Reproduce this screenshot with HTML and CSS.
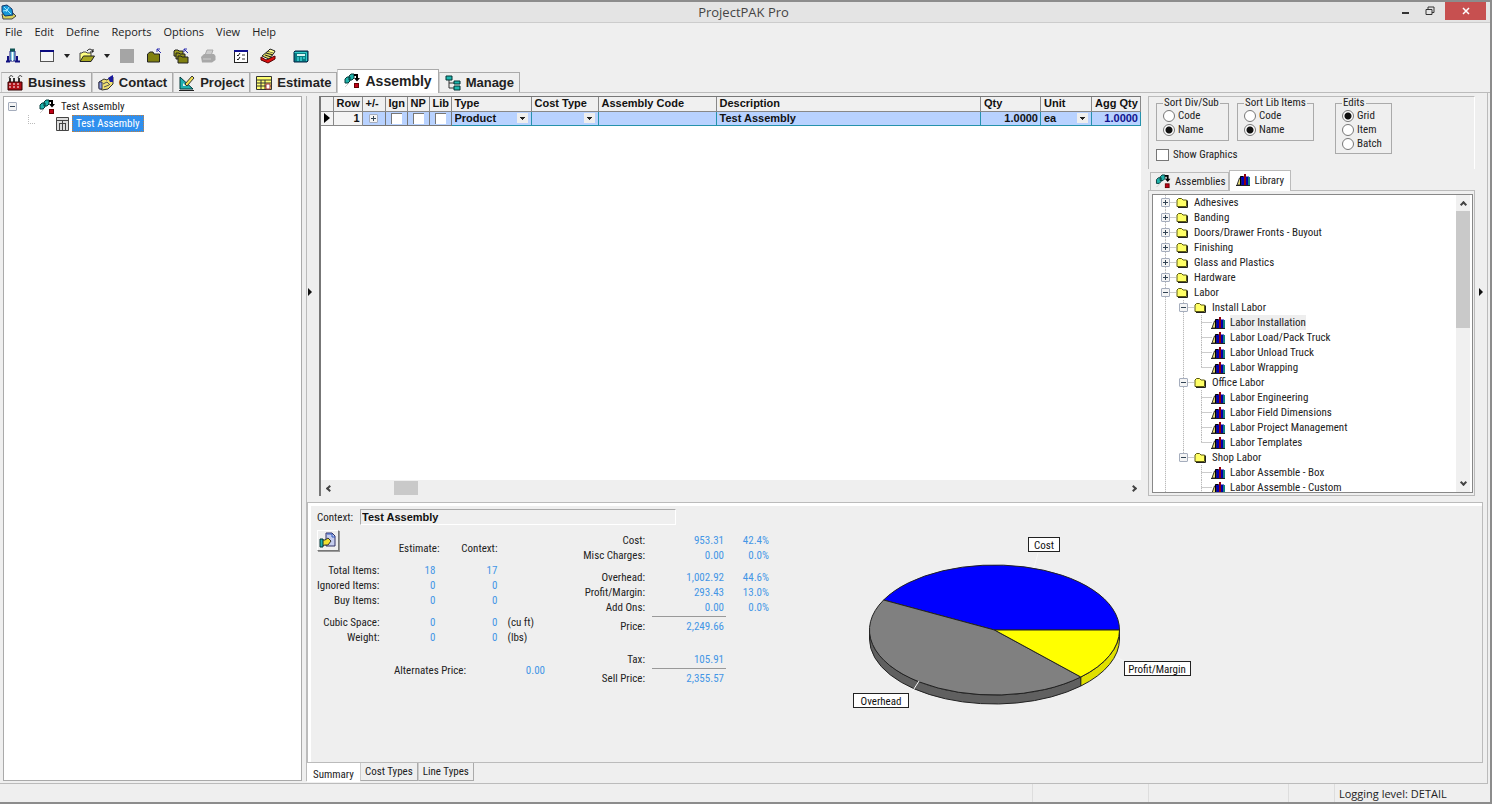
FILE: index.html
```html
<!DOCTYPE html>
<html lang="en">
<head>
<meta charset="utf-8">
<title>ProjectPAK Pro</title>
<link rel="stylesheet" href="styles.css">
</head>
<body>
<svg class="defs" aria-hidden="true">
  <symbol id="i-folder" viewBox="0 0 12 11"><path d="M1 9.500V3L2.500 1.500H5.500L7 3H10.500V9.500Z" fill="#ffff66" stroke="#5c5a10"/><path d="M11.500 3.500V10.500H2" fill="none" stroke="#222"/></symbol>
  <symbol id="i-books" viewBox="0 0 14 12"><path d="M4 2.500H13V11.500H4Z" fill="#0000b8"/><path d="M1 11L3.500 4L5 5V11Z" fill="#e8dc78" stroke="#333"/><path d="M4.500 11V2.500H7.500" fill="none" stroke="#000"/><path d="M8 0H10V12H8Z" fill="#900010"/><path d="M11 3H12V11H11Z" fill="#0000a0"/><path d="M13 3V12" stroke="#158080" stroke-width="2"/><path d="M0 11.500H14" stroke="#222"/></symbol>
  <symbol id="i-assembly" viewBox="0 0 16 16"><path d="M1 14L5 10" stroke="#ccc"/><path d="M1 6L3 4H6V8L4 10H1ZM5 3L7 1H10V5L8 7H5Z" fill="#20b2aa" stroke="#043c3c"/><path d="M10 2H13V6" fill="none" stroke="#000" stroke-width="2"/><path d="M10 5H16L13 8.500Z" fill="#000"/><rect x="10.500" y="10.500" width="4" height="4" fill="#c00018" stroke="#600"/></symbol>
</svg>
<div class="window">
  <header class="titlebar">
    <svg class="app-icon" viewBox="0 0 16 16"><path d="M2 10L13 9L16 12L12 15H3Z" fill="#d9d15b" stroke="#444"/><path d="M2 2L7 1L12 5L13 11L5 12L2 8Z" fill="#1698d8" stroke="#12376b"/><path d="M4 3L11 10M6 8L9 3M3 7L8 6" stroke="#9be6ff"/></svg>
    <h1>ProjectPAK Pro</h1>
    <div class="window-buttons">
      <button class="win" aria-label="Minimize"><svg viewBox="0 0 10 10"><path d="M1 7H8" stroke="#333" stroke-width="2"/></svg></button>
      <button class="win" aria-label="Restore"><svg viewBox="0 0 10 10"><path d="M1 3.500H7V8.500H1ZM3 3V1H9V6.500H7" fill="none" stroke="#333"/></svg></button>
      <button class="win close" aria-label="Close"><svg viewBox="0 0 10 10"><path d="M2 2L8 8M8 2L2 8" stroke="#fff" stroke-width="1.500"/></svg></button>
    </div>
  </header>
  <nav class="menu"><button>File</button><button>Edit</button><button>Define</button><button>Reports</button><button>Options</button><button>View</button><button>Help</button></nav>
  <div class="toolbar">
    <button class="tool" aria-label="Exit"><svg viewBox="0 0 16 16"><path d="M5 3H10V13H5Z" fill="#8fd6e8" stroke="#1a1a80"/><path d="M5 0.500H10V3.500H5Z" fill="#155"/><path d="M3 8V13M12 8V13M1 13.500H5M10 13.500H15" stroke="#101080" stroke-width="2"/><path d="M7.500 4V13" stroke="#fff"/></svg></button>
    <button class="tool wide" aria-label="New"><svg viewBox="0 0 16 16"><rect x="1.500" y="2.500" width="13" height="11" fill="#f6f6f6" stroke="#555"/><path d="M1 3H15" stroke="#0c0c80" stroke-width="2"/></svg></button>
    <button class="drop" aria-label="New options"></button>
    <button class="tool" aria-label="Open"><svg viewBox="0 0 16 16"><path d="M1 13V5H3L4 4H7L8 5H12V8" fill="#ffff80" stroke="#444"/><path d="M1 13.500L4.500 8H15.500L12 13.500Z" fill="#a8a820" stroke="#222"/><path d="M8 3C10 0 13 1 14 4M14 1V4H11" fill="none" stroke="#111"/></svg></button>
    <button class="drop" aria-label="Open options"></button>
    <button class="tool" aria-label="Save" disabled><svg viewBox="0 0 16 16"><rect x="1" y="1" width="14" height="14" fill="#a5a5a5"/></svg></button>
    <button class="tool apart" aria-label="Close file"><svg viewBox="0 0 16 16"><path d="M1.500 14V6L4 4H7L8 6H13.500V14Z" fill="#808010" stroke="#222"/><path d="M15 5L11 1M11 4V1H14" stroke="#3030b0" fill="none"/></svg></button>
    <button class="tool apart" aria-label="Close all"><svg viewBox="0 0 16 16"><path d="M1 8V3L2 2H5L6 3H10V9Z" fill="#a0a020" stroke="#222"/><path d="M3 11V5H6L7 6H12V11Z" fill="#909018" stroke="#222"/><path d="M5 15V8H8L9 9H15V15Z" fill="#808010" stroke="#222"/><path d="M15 5L11 1M11 4V1H14" stroke="#3030b0" fill="none"/></svg></button>
    <button class="tool apart" aria-label="Print" disabled><svg viewBox="0 0 16 16"><path d="M5 7L7 2H13L11 8" fill="#ccc" stroke="#aaa"/><path d="M1 9L4 6H14L15.500 8V12L12 14.500H2Z" fill="#a8a8a8"/><path d="M3 11H11" stroke="#ccc"/></svg></button>
    <button class="tool far" aria-label="Options"><svg viewBox="0 0 16 16"><rect x="1.500" y="2.500" width="13" height="12" fill="#fff" stroke="#222"/><path d="M1 3H15" stroke="#101090" stroke-width="2"/><path d="M4 7L5 8L7 5M4 11L5 12L7 9" fill="none" stroke="#111"/><path d="M9 7H12M9 11H12" stroke="#333"/></svg></button>
    <button class="tool apart" aria-label="Card file"><svg viewBox="0 0 16 16"><path d="M1 9L6 12L15 8V11L8 15L1 12Z" fill="#e01010" stroke="#500"/><path d="M2 8L8 3L14 5L9 11Z" fill="#e0dc60" stroke="#222"/><path d="M5 7L11 9M6 5L13 7" stroke="#222"/><path d="M8 3L10 1L15 3L14 5" fill="#ffff90" stroke="#222"/></svg></button>
    <button class="tool far" aria-label="Calculator"><svg viewBox="0 0 16 16"><path d="M1 4L2 3H15V13L14 14H1Z" fill="#087c84" stroke="#024"/><path d="M1.500 4.500H13.500V13" fill="none" stroke="#3cc"/><rect x="4" y="6" width="8" height="2" fill="#d8f6f6"/><path d="M4 10H6M7 10H9M10 10H12M4 12H6M7 12H9" stroke="#5ff"/></svg></button>
  </div>
  <nav class="tabs">
    <button class="tab"><svg viewBox="0 0 16 16"><path d="M3 15V3M7 15V3M12 15V3" stroke="#333" stroke-width="2"/><path d="M2 3C3 0 5 0 6 2M11 3C12 0 14 0 15 2" stroke="#333" fill="none"/><path d="M1 7H15V15H1Z" fill="#b01018" stroke="#300"/><path d="M2 9H14M2 12H14" stroke="#fff" stroke-dasharray="2 2"/></svg>Business</button>
    <button class="tab"><svg viewBox="0 0 16 16"><path d="M1 7L6 4L9 5L14 1L15 2V9L10 14L4 15L1 13Z" fill="#f0e070" stroke="#333"/><path d="M10 3L15 0V7L12 7Z" fill="#1a1aa0"/><path d="M1 7H4V14H1Z" fill="#90a0e0" stroke="#335"/><path d="M5 9L9 7L12 10M6 12L11 10" fill="none" stroke="#555"/></svg>Contact</button>
    <button class="tab"><svg viewBox="0 0 16 16"><path d="M1 2V14H14Z" fill="#20b0b0" stroke="#043838"/><path d="M4 8V11H7Z" fill="#eee"/><path d="M6 9L13 1L15 3L8 11Z" fill="#f0e050" stroke="#333"/><path d="M0 15.500H15" stroke="#222"/></svg>Project</button>
    <button class="tab"><svg viewBox="0 0 16 16"><path d="M0.500 1.500H15.500V14.500H0.500Z" fill="#ffff70" stroke="#333"/><path d="M1 5H15M1 8H15M1 11H15M5 5V15M9 5V15" stroke="#333"/><path d="M10 9H14V14H10Z" fill="#fff" stroke="#a33"/></svg>Estimate</button>
    <button class="tab active"><svg viewBox="0 0 16 16"><use href="#i-assembly"/></svg>Assembly</button>
    <button class="tab"><svg viewBox="0 0 16 16"><path d="M4 5V13H9M4 8H9" fill="none" stroke="#333"/><path d="M1 1H7V5H1ZM9 6H15V9H9ZM9 11H15V15H9Z" fill="#20b8b0" stroke="#033"/></svg>Manage</button>
  </nav>
  <main class="work">
    <aside class="project-tree">
      <div class="node"><span class="toggle minus"></span><svg class="node-icon" viewBox="0 0 16 16"><use href="#i-assembly"/></svg><span>Test Assembly</span></div>
      <div class="node child"><span class="elbow"></span><svg class="item-icon" viewBox="0 0 13 14"><path d="M0.500 0.500H12.500V13.500H0.500Z" fill="#ddd" stroke="#444"/><path d="M1 3.500H12M3.500 6V13M9.500 6V13M6.500 4V13" stroke="#444"/><path d="M3 6.500H10" stroke="#444"/></svg><span class="selected">Test Assembly</span></div>
    </aside>
    <div class="right">
      <div class="upper">
        <div class="splitter"><span class="arrow"></span></div>
        <section class="grid-panel">
          <table class="grid">
            <colgroup><col class="c-mark"><col class="c-row"><col class="c-exp"><col class="c-chk"><col class="c-chk"><col class="c-chk"><col class="c-type"><col class="c-cost"><col class="c-code"><col><col class="c-qty"><col class="c-unit"><col class="c-agg"></colgroup>
            <thead><tr><th></th><th class="num">Row</th><th>+/-</th><th>Ign</th><th>NP</th><th>Lib</th><th>Type</th><th>Cost Type</th><th>Assembly Code</th><th>Description</th><th>Qty</th><th>Unit</th><th>Agg Qty</th></tr></thead>
            <tbody><tr>
              <td class="plain"><span class="marker"></span></td><td class="plain num">1</td><td class="mid expander"><span class="toggle plus"></span></td>
              <td class="mid"><input class="flat" type="checkbox" aria-label="Ign"></td><td class="mid"><input class="flat" type="checkbox" aria-label="NP"></td><td class="mid"><input class="flat" type="checkbox" aria-label="Lib"></td>
              <td class="combo-cell"><span class="combo"><select aria-label="Type"><option>Product</option></select></span></td>
              <td class="combo-cell"><span class="combo"><select aria-label="Cost Type"><option></option></select></span></td>
              <td></td><td>Test Assembly</td><td class="num dark-left">1.0000</td>
              <td class="combo-cell"><span class="combo"><select aria-label="Unit"><option>ea</option></select></span></td>
              <td class="num agg">1.0000</td>
            </tr></tbody>
          </table>
          <div class="grid-space"></div>
          <div class="hscroll"><span class="chev left"></span><span class="hthumb"></span><span class="chev rightward"></span></div>
        </section>
        <section class="library">
          <div class="options">
            <div class="groups">
              <fieldset class="div"><legend>Sort Div/Sub</legend><label><input type="radio" name="div">Code</label><label><input type="radio" name="div" checked>Name</label></fieldset>
              <fieldset class="lib"><legend>Sort Lib Items</legend><label><input type="radio" name="lib">Code</label><label><input type="radio" name="lib" checked>Name</label></fieldset>
              <fieldset class="edits"><legend>Edits</legend><label><input type="radio" name="edit" checked>Grid</label><label><input type="radio" name="edit">Item</label><label><input type="radio" name="edit">Batch</label></fieldset>
            </div>
            <label class="show"><input type="checkbox">Show Graphics</label>
          </div>
          <div class="subtabs">
            <button class="subtab"><svg viewBox="0 0 16 16"><use href="#i-assembly"/></svg>Assemblies</button>
            <button class="subtab active"><svg viewBox="0 0 14 12"><use href="#i-books"/></svg>Library</button>
          </div>
          <div class="tree-pane"><div class="tree-box">
            <ul class="tree">
              <li><div class="leaf"><span class="toggle plus"></span><svg class="folder"><use href="#i-folder"/></svg><span>Adhesives</span></div></li>
              <li><div class="leaf"><span class="toggle plus"></span><svg class="folder"><use href="#i-folder"/></svg><span>Banding</span></div></li>
              <li><div class="leaf"><span class="toggle plus"></span><svg class="folder"><use href="#i-folder"/></svg><span>Doors/Drawer Fronts - Buyout</span></div></li>
              <li><div class="leaf"><span class="toggle plus"></span><svg class="folder"><use href="#i-folder"/></svg><span>Finishing</span></div></li>
              <li><div class="leaf"><span class="toggle plus"></span><svg class="folder"><use href="#i-folder"/></svg><span>Glass and Plastics</span></div></li>
              <li><div class="leaf"><span class="toggle plus"></span><svg class="folder"><use href="#i-folder"/></svg><span>Hardware</span></div></li>
              <li><div class="leaf"><span class="toggle minus"></span><svg class="folder"><use href="#i-folder"/></svg><span>Labor</span></div>
                <ul>
                  <li><div class="leaf"><span class="toggle minus"></span><svg class="folder"><use href="#i-folder"/></svg><span>Install Labor</span></div>
                    <ul>
                      <li><div class="leaf book"><svg class="books"><use href="#i-books"/></svg><span class="current">Labor Installation</span></div></li>
                      <li><div class="leaf book"><svg class="books"><use href="#i-books"/></svg><span>Labor Load/Pack Truck</span></div></li>
                      <li><div class="leaf book"><svg class="books"><use href="#i-books"/></svg><span>Labor Unload Truck</span></div></li>
                      <li><div class="leaf book"><svg class="books"><use href="#i-books"/></svg><span>Labor Wrapping</span></div></li>
                    </ul></li>
                  <li><div class="leaf"><span class="toggle minus"></span><svg class="folder"><use href="#i-folder"/></svg><span>Office Labor</span></div>
                    <ul>
                      <li><div class="leaf book"><svg class="books"><use href="#i-books"/></svg><span>Labor Engineering</span></div></li>
                      <li><div class="leaf book"><svg class="books"><use href="#i-books"/></svg><span>Labor Field Dimensions</span></div></li>
                      <li><div class="leaf book"><svg class="books"><use href="#i-books"/></svg><span>Labor Project Management</span></div></li>
                      <li><div class="leaf book"><svg class="books"><use href="#i-books"/></svg><span>Labor Templates</span></div></li>
                    </ul></li>
                  <li><div class="leaf"><span class="toggle minus"></span><svg class="folder"><use href="#i-folder"/></svg><span>Shop Labor</span></div>
                    <ul class="more">
                      <li><div class="leaf book"><svg class="books"><use href="#i-books"/></svg><span>Labor Assemble - Box</span></div></li>
                      <li><div class="leaf book"><svg class="books"><use href="#i-books"/></svg><span>Labor Assemble - Custom</span></div></li>
                    </ul></li>
                </ul></li>
            </ul>
            <div class="vscroll"><span class="chev up"></span><span class="vthumb"></span><span class="chev down"></span></div>
          </div></div>
        </section>
        <div class="splitter edge"><span class="arrow"></span></div>
      </div>
      <section class="summary">
        <div class="figures">
          <div class="context"><label for="ctx">Context:</label><input id="ctx" type="text" value="Test Assembly" readonly></div>
          <div class="blocks">
            <div class="counts-block">
              <button class="find" aria-label="Preview"><svg viewBox="0 0 18 17"><path d="M7 1H13L16 4V14H7Z" fill="#c4ccee" stroke="#336"/><path d="M8 2H13V5H16" fill="none" stroke="#335ac0"/><path d="M2 8H6L9 6L12 9L9 13H6L2 14Z" fill="#f0e030" stroke="#333"/><path d="M1 7H4V15H1Z" fill="#20b0b0" stroke="#033"/></svg></button>
              <table class="counts">
                <thead><tr><td></td><th>Estimate:</th><th>Context:</th><td></td></tr></thead>
                <tbody>
                  <tr><th>Total Items:</th><td>18</td><td>17</td><td></td></tr>
                  <tr><th>Ignored Items:</th><td>0</td><td>0</td><td></td></tr>
                  <tr><th>Buy Items:</th><td>0</td><td>0</td><td></td></tr>
                  <tr class="gap"><th>Cubic Space:</th><td>0</td><td>0</td><td class="unit">(cu ft)</td></tr>
                  <tr><th>Weight:</th><td>0</td><td>0</td><td class="unit">(lbs)</td></tr>
                </tbody>
              </table>
              <div class="alternates"><span>Alternates Price:</span><span class="value">0.00</span></div>
            </div>
            <table class="money">
              <tbody>
                <tr><th>Cost:</th><td>953.31</td><td>42.4%</td></tr>
                <tr><th>Misc Charges:</th><td>0.00</td><td>0.0%</td></tr>
                <tr class="gap"><th>Overhead:</th><td>1,002.92</td><td>44.6%</td></tr>
                <tr><th>Profit/Margin:</th><td>293.43</td><td>13.0%</td></tr>
                <tr><th>Add Ons:</th><td>0.00</td><td>0.0%</td></tr>
                <tr class="total"><th>Price:</th><td><span>2,249.66</span></td><td></td></tr>
                <tr class="tax"><th>Tax:</th><td>105.91</td><td></td></tr>
                <tr class="total"><th>Sell Price:</th><td><span>2,355.57</span></td><td></td></tr>
              </tbody>
            </table>
          </div>
        </div>
        <svg class="pie" viewBox="0 0 345 175" role="img" aria-label="Price breakdown">
          <g stroke="#222" stroke-linejoin="round">
            <path d="M19.500 95V104A125 65 0 0 0 230.850 151V142A125 65 0 0 1 19.500 95Z" fill="#606060"/>
            <path d="M269.500 95V104A125 65 0 0 1 230.850 151V142A125 65 0 0 0 269.500 95Z" fill="#e0e000"/>
            <path d="M144.500 95L33.600 65A125 65 0 0 1 269.500 95Z" fill="#0000ff"/>
            <path d="M144.500 95L33.600 65A125 65 0 0 0 230.850 142Z" fill="#808080"/>
            <path d="M144.500 95H269.500A125 65 0 0 1 230.850 142Z" fill="#ffff00"/>
          </g>
          <path d="M188 18L184 33M69 146L62 157M266 122L274 126" stroke="#f8f8f8" fill="none"/>
          <g fill="#fff" stroke="#222"><rect x="178.500" y="2.500" width="31" height="14"/><rect x="274.500" y="126.500" width="66" height="14"/><rect x="3.500" y="158.500" width="55" height="14"/></g>
          <g class="pie-text" text-anchor="middle"><text x="194" y="14">Cost</text><text x="307" y="138">Profit/Margin</text><text x="31" y="170">Overhead</text></g>
        </svg>
      </section>
      <nav class="bottom-tabs"><button class="active">Summary</button><button>Cost Types</button><button>Line Types</button></nav>
    </div>
  </main>
  <footer class="status"><span></span><span></span><span></span><span></span><span>Logging level: DETAIL</span></footer>
</div>
</body>
</html>
```

FILE: styles.css
```css
* { box-sizing: border-box; }
body { margin: 0; background: #efefef; color: #222; font: 11px/15px "Roboto Condensed", Roboto, sans-serif; }
button { margin: 0; padding: 0; border: 0; background: none; color: inherit; font: inherit; }
svg { display: block; flex: none; }
input, select { margin: 0; font: inherit; color: inherit; }
.defs { position: absolute; width: 0; height: 0; }
.window { display: flex; flex-direction: column; height: 100vh; border: solid #8c8c8c; border-width: 2px 2px 2px 0; }

.titlebar { display: flex; align-items: center; height: 21px; flex: none; background: #e4e4e4; border-bottom: 1px solid #ccc; }
.app-icon { width: 16px; height: 16px; }
.titlebar h1 { flex: 1; margin: 0; padding-left: 77px; text-align: center; font: 13px/20px "Open Sans", sans-serif; color: #444; }
.window-buttons { display: flex; align-self: flex-start; padding-right: 4px; }
.win { display: grid; place-items: center; width: 24px; height: 18px; }
.win svg { width: 10px; height: 10px; }
.win.close { width: 41px; margin-left: 3px; background: #c75050; }

.menu { display: flex; flex: none; align-items: flex-start; gap: 12px; height: 20px; padding-left: 5px; font: 11px/17px "Open Sans", sans-serif; }
.toolbar { display: flex; flex: none; align-items: center; height: 26px; padding-left: 5px; }
.tool { width: 16px; height: 16px; }
.tool svg { width: 16px; height: 16px; }
.wide { margin-left: 18px; }
.apart { margin-left: 11px; }
.far { margin-left: 17px; }
.drop { width: 24px; height: 16px; display: grid; place-items: center; }
.drop::after { content: ""; border: 3px solid transparent; border-top: 4px solid #222; border-bottom: 0; }

.tabs { display: flex; flex: none; align-items: flex-end; height: 24px; padding-left: 1px; font: bold 13px/18px "Liberation Sans", sans-serif; border-bottom: 1px solid #bbb; }
.tab { display: flex; align-items: center; gap: 5px; height: 20px; padding: 0 5px; border: 1px solid #aaa; border-bottom: 0; border-left-color: #ccc; }
.tab svg { width: 16px; height: 16px; }
.tab.active { height: 24px; margin-bottom: -1px; padding: 0 6px 2px 6px; background: #fff; font-size: 14px; }

.work { display: flex; flex: 1; min-height: 0; padding: 3px 4px 2px 3px; border-right: 1px solid #bbb; border-bottom: 1px solid #bbb; margin-right: 2px; }
.project-tree { flex: 0 0 299px; padding: 1px 4px; background: #fff; border: 1px solid #aaa; }
.node { display: flex; align-items: center; height: 17px; }
.node-icon { width: 16px; height: 16px; margin: 0 6px 0 22px; }
.child { padding-left: 20px; }
.elbow { align-self: flex-start; width: 7px; height: 9px; border: dotted #bbb; border-width: 0 0 1px 1px; }
.item-icon { width: 13px; height: 14px; margin: 0 3px 0 21px; }
.selected { padding: 0 3px; background: #2f8fee; color: #fff; border: 1px dotted #c08040; }

.toggle { display: grid; place-items: center; flex: none; width: 9px; height: 9px; border: 1px solid #a5adbd; border-radius: 1px; background: linear-gradient(#345, #345) center / 5px 1px no-repeat, #f4f4f4; }
.toggle.plus { background: linear-gradient(#345, #345) center / 5px 1px no-repeat, linear-gradient(#345, #345) center / 1px 5px no-repeat, #f4f4f4; }

.right { display: flex; flex: 1; flex-direction: column; min-width: 0; margin-left: 4px; border-left: 1px solid #bbb; }
.upper { display: flex; flex: 1; min-height: 0; }
.splitter { display: flex; align-items: center; flex: 0 0 12px; padding: 0 0 8px 1px; }
.splitter.edge { flex-basis: 8px; padding-left: 4px; }
.arrow { border: 4px solid transparent; border-left-color: #111; border-right: 0; }
.grid-panel { display: flex; flex: 1; flex-direction: column; min-width: 0; background: #fff; border: solid #777; border-width: 1px 0 0 2px; }
.grid { width: 100%; table-layout: fixed; border-collapse: collapse; font: bold 11px/13px "Liberation Sans", sans-serif; color: #111; }
.grid th, .grid td { height: 14px; padding: 0 2px 0 3px; text-align: left; white-space: nowrap; border: 1px solid #888; border-top: 0; }
.grid th { background: #f0f0f0; }
.grid td { background: #b8d2ff; border-color: #2592ac; }
.grid th:first-child, .grid td:first-child { border-left: 0; }
.grid .num { text-align: right; }
.grid .mid { padding: 0; text-align: center; border-color: #777; }
.grid .plain { background: #f4f4f4; border-color: #888; }
.grid .agg { color: #11118c; }
.grid .dark-left { border-left-color: #123; }
.grid .combo-cell { padding-right: 0; }
.expander .toggle { display: inline-block; vertical-align: middle; }
.marker { display: block; width: 6px; border: 5px solid transparent; border-left: 6px solid #000; border-right: 0; }
.c-mark { width: 12px; } .c-row { width: 29px; } .c-exp { width: 23px; } .c-chk { width: 22px; } .c-type { width: 80px; } .c-cost { width: 67px; } .c-code { width: 118px; } .c-qty { width: 60px; } .c-unit { width: 51px; } .c-agg { width: 49px; }
.flat { display: inline-block; vertical-align: middle; appearance: none; width: 11px; height: 11px; background: #fff; border: solid #777; border-width: 1px 0 0 1px; }
.combo { display: flex; align-items: center; height: 13px; }
.combo select { flex: 1; min-width: 0; height: 13px; padding: 0; border: 0; background: none; appearance: none; }
.combo::after { content: ""; width: 11px; height: 10px; margin-right: 3px; background: linear-gradient(#222, #222) 5px 6px / 1px 1px no-repeat, linear-gradient(#222, #222) 4px 5px / 3px 1px no-repeat, linear-gradient(#222, #222) 3px 4px / 5px 1px no-repeat, #eee; }
.grid-space { flex: 1; }
.hscroll { display: flex; align-items: center; height: 16px; padding: 0 5px 0 6px; background: #efefef; }
.hthumb { width: 24px; height: 14px; margin: 0 auto 0 62px; background: #c9c9c9; }
.chev { width: 5px; height: 5px; border: solid #444; border-width: 2px 2px 0 0; }
.chev.left { transform: rotate(225deg); } .chev.rightward { transform: rotate(45deg); } .chev.up { transform: rotate(315deg); } .chev.down { transform: rotate(135deg); }

.library { display: flex; flex: 0 0 327px; flex-direction: column; min-height: 0; margin-left: 7px; }
.options { height: 73px; flex: none; padding: 0 7px; border: solid #bbb; border-width: 1px 1px 0 1px; border-right-color: #fff; }
.groups { display: flex; align-items: flex-start; gap: 8px; }
.groups fieldset { min-width: 0; margin: 0; padding: 0 0 3px 6px; border: 1px solid #aaa; line-height: 14px; }
.groups .div { width: 73px; }
.groups .lib { width: 77px; }
.groups legend { padding: 0 1px; line-height: 12px; white-space: nowrap; }
.groups label { display: flex; align-items: center; height: 14px; gap: 3px; }
.groups .edits { width: 57px; margin-left: 13px; padding-bottom: 2px; }
input[type="radio"] { appearance: none; width: 12px; height: 12px; border: 1px solid #777; border-radius: 50%; background: #fff; }
input[type="radio"]:checked { background: radial-gradient(circle, #111 0 3px, #fff 4px); }
.show { display: flex; align-items: center; gap: 4px; width: 100px; margin-top: -7px; }
.show input { appearance: none; width: 13px; height: 12px; border: 1px solid #777; background: #fff; }
.subtabs { display: flex; flex: none; align-items: flex-end; height: 20px; padding-left: 2px; margin-top: 1px; }
.subtab { display: flex; align-items: center; gap: 4px; height: 18px; padding: 0 3px 0 4px; border: 1px solid #bbb; border-bottom: 0; }
.subtab svg { width: 16px; height: 15px; }
.subtab.active { position: relative; height: 21px; margin-bottom: -1px; padding: 0 6px 2px; background: #fff; }
.subtab.active svg { width: 14px; height: 12px; }
.tree-pane { flex: 1; min-height: 0; padding: 3px 1px 2px 3px; border: 1px solid #bbb; }
.tree-box { display: flex; height: 100%; overflow: hidden; background: #fff; border: 1px solid #888; padding-right: 2px; }
.tree { flex: 1; }
.tree, .tree ul { margin: 0; padding: 0; list-style: none; }
.tree { padding: 0 0 0 8px; }
.tree ul { padding-left: 18px; }
.tree li { background: repeating-linear-gradient(#bbb 0 1px, #eee 1px 2px) 4px 0 / 1px 100% no-repeat; }
.tree li li:last-child { background-size: 1px 8px; }
.tree .more li:last-child { background-size: 1px 100%; }
.leaf { display: flex; align-items: center; height: 15px; white-space: nowrap; background: linear-gradient(#ccc, #ccc) 4px 7px / 11px 1px no-repeat; }
.leaf .folder { width: 12px; height: 11px; margin: 0 6px; }
.leaf.book { padding-left: 14px; }
.leaf .books { width: 14px; height: 12px; margin-right: 5px; }
.current { background: #eee; }
.vscroll { display: flex; flex-direction: column; align-items: center; width: 14px; padding: 7px 0; background: #f0f0f0; }
.vthumb { width: 14px; height: 117px; margin: 4px 0 auto; background: #c9c9c9; }

.summary { display: flex; flex: 0 0 261px; margin: 6px 0 0; padding: 6px 10px 0 9px; border: 1px solid #bbb; box-shadow: inset 3px 3px #fff; }
.figures { flex: 0 0 452px; }
.context { display: flex; align-items: center; height: 16px; }
.context label { width: 43px; }
.context input { width: 316px; height: 16px; padding: 0 1px; font: bold 11px "Liberation Sans", sans-serif; color: #111; background: #efefef; border: 1px solid #aaa; border-color: #aaa #fff #fff #aaa; }
.blocks { display: flex; justify-content: space-between; padding-top: 5px; }
.find { display: grid; place-items: center; width: 22px; height: 21px; border: 1px solid #777; border-color: #fff #777 #777 #fff; box-shadow: 1px 1px #999; }
.find svg { width: 18px; height: 17px; }
.counts, .money { border-collapse: collapse; text-align: right; line-height: 15px; }
.summary th { padding: 0; font-weight: normal; white-space: nowrap; text-align: right; }
.summary td { padding: 0; color: #4496e6; }
.counts { margin-top: -10px; }
.counts td:first-child, .counts th:first-child { width: 62px; }
.counts td:nth-child(2), .counts th:nth-child(2) { width: 60px; padding-right: 4px; }
.counts td:nth-child(3), .counts th:nth-child(3) { width: 58px; }
.counts thead th, .counts thead th:nth-child(2) { padding: 0 0 7px; }
.summary .unit { padding-left: 10px; color: #222; text-align: left; }
.gap th, .gap td { padding-top: 7px; }
.alternates { display: flex; justify-content: space-between; width: 151px; margin: 18px 0 0 77px; }
.alternates .value { color: #4496e6; }
.money { align-self: flex-start; margin-top: 3px; }
.money td:nth-child(2) { width: 81px; padding-right: 2px; }
.money td:nth-child(3) { width: 43px; }
.money .total span { display: block; margin: 1px -2px 0 7px; padding: 2px 2px 0 0; border-top: 1px solid #999; }
.money .total th { padding-top: 4px; }
.money .tax th, .money .tax td { padding-top: 18px; }
.pie { flex: 0 0 345px; height: 175px; margin: 26px 0 0 81px; }
.pie-text { font: 11px "Roboto Condensed", Roboto, sans-serif; fill: #111; }
.bottom-tabs { display: flex; flex: none; align-items: flex-start; height: 18px; }
.bottom-tabs button { height: 18px; padding: 0 4px; border: 1px solid #aaa; border-top: 0; border-left-color: #ccc; }
.bottom-tabs .active { height: 19px; padding: 3px 6px 0; background: #fff; border: 0; }

.status { display: flex; flex: none; height: 18px; font: 11px/20px "Open Sans", sans-serif; }
.status span { flex: 0 0 116px; padding-left: 4px; border-left: 1px solid #ddd; }
.status span:first-child { flex: 1; border: 0; }
.status span:nth-child(3) { flex-basis: 140px; }
.status span:nth-child(4) { flex-basis: 46px; }
.status span:last-child { flex-basis: 156px; }
```
